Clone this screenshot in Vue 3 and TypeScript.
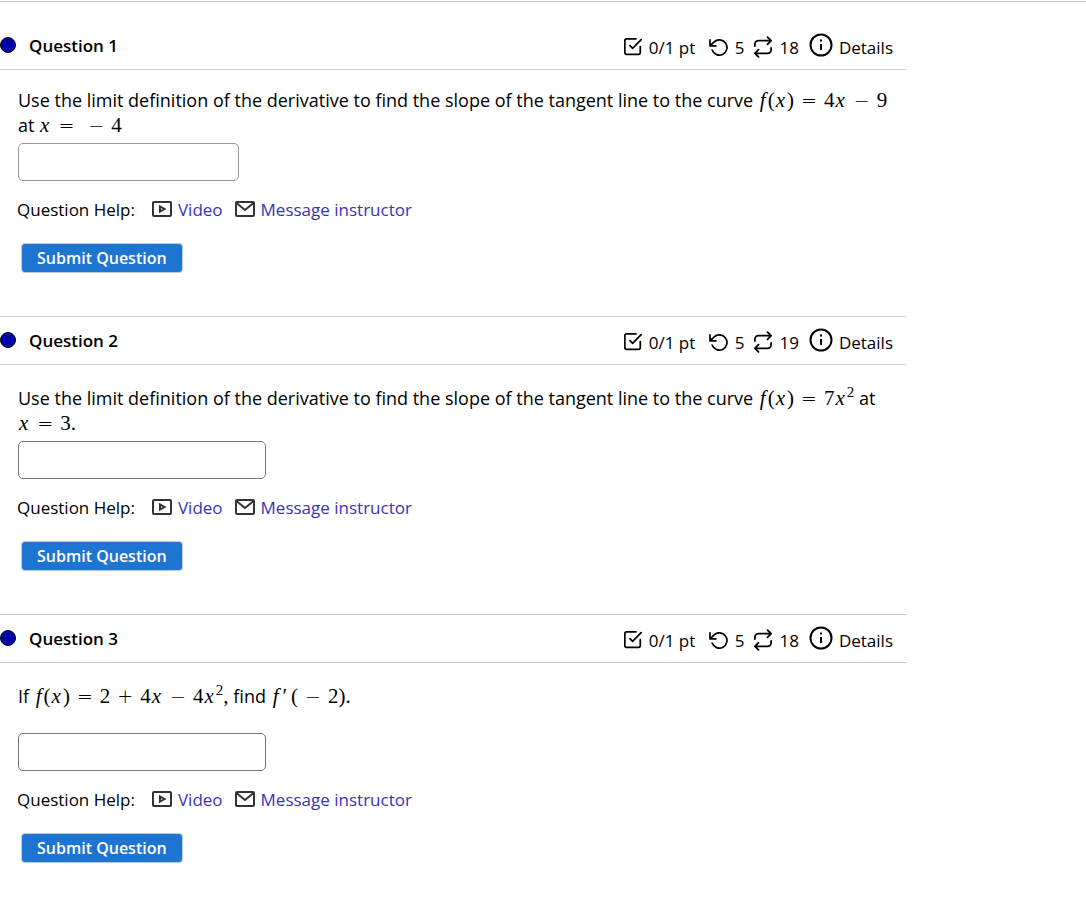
<script setup lang="ts">
type Kind = 'text' | 'num' | 'var' | 'fn' | 'op' | 'sup' | 'paren' | 'prime'

interface Piece {
  kind: Kind
  value: string
}

interface Question {
  id: number
  versions: number
  prompt: Piece[][]
  raised: boolean
  spaced: boolean
  wide: boolean
}

const p = (kind: Kind, value: string): Piece => ({ kind, value })
const fOfX = [p('fn', 'f'), p('paren', '('), p('var', 'x'), p('paren', ')')]
const lead = 'Use the limit definition of the derivative to find the slope of the tangent line to the curve '

const questions: Question[] = [
  {
    id: 1,
    versions: 18,
    raised: false,
    spaced: false,
    wide: false,
    prompt: [
      [p('text', lead)],
      [...fOfX, p('op', '='), p('num', '4'), p('var', 'x'), p('op', '−'), p('num', '9')],
      [p('text', ' at ')],
      [p('var', 'x'), p('op', '='), p('op', '−'), p('num', '4')],
    ],
  },
  {
    id: 2,
    versions: 19,
    raised: true,
    spaced: false,
    wide: true,
    prompt: [
      [p('text', lead)],
      [...fOfX, p('op', '='), p('num', '7'), p('var', 'x'), p('sup', '2')],
      [p('text', ' at ')],
      [p('var', 'x'), p('op', '='), p('num', '3.')],
    ],
  },
  {
    id: 3,
    versions: 18,
    raised: true,
    spaced: true,
    wide: true,
    prompt: [
      [p('text', 'If ')],
      [...fOfX, p('op', '='), p('num', '2'), p('op', '+'), p('num', '4'), p('var', 'x'), p('op', '−'), p('num', '4'), p('var', 'x'), p('sup', '2'), p('num', ',')],
      [p('text', ' find ')],
      [p('fn', 'f'), p('prime', '′'), p('paren', '('), p('op', '−'), p('num', '2'), p('paren', ')'), p('num', '.')],
    ],
  },
]
</script>

<template>
  <main class="page">
    <hr class="rule" />
    <section v-for="q in questions" :key="q.id" class="question">
      <header class="head">
        <span class="dot"></span>
        <h2 class="title">Question {{ q.id }}</h2>
        <div class="stats">
          <span class="stat score">
            <svg class="check" viewBox="2 2 21 21" aria-hidden="true">
              <path d="M9 11l3 3L22 4M21 12v7a2 2 0 0 1-2 2H5a2 2 0 0 1-2-2V5a2 2 0 0 1 2-2h11" />
            </svg>
            0/1 pt
          </span>
          <span class="stat">
            <svg class="undo" viewBox="0 2 22 20" aria-hidden="true">
              <path d="M1 3v7h7M3.500 15a9 9 0 1 0 2.100-9.400L1 10" />
            </svg>
            5
          </span>
          <span class="stat">
            <svg class="repeat" viewBox="2 0 20 24" aria-hidden="true">
              <path d="M17 1l4 4-4 4M3 11V9a4 4 0 0 1 4-4h14M7 23l-4-4 4-4M21 13v2a4 4 0 0 1-4 4H3" />
            </svg>
            {{ q.versions }}
          </span>
          <button type="button" class="details">
            <svg class="info" viewBox="0 0 24 24" aria-hidden="true">
              <circle cx="12" cy="12" r="10.500" />
              <path d="M12 11V17M12 6.500V8.500" />
            </svg>
            Details
          </button>
        </div>
      </header>

      <form class="body" @submit.prevent>
        <label
          class="prompt"
          :class="{ raised: q.raised, spaced: q.spaced }"
          :for="`answer-${q.id}`"
        ><span
          v-for="(group, g) in q.prompt"
          :key="g"
          :class="group[0].kind === 'text' ? 'words' : 'math'"
        ><span v-for="(piece, i) in group" :key="i" :class="piece.kind">{{ piece.value }}</span></span></label>
        <input :id="`answer-${q.id}`" class="answer" :class="{ wide: q.wide }" type="text" autocomplete="off" />
        <div class="help">
          <span class="help-label">Question Help:</span>
          <a class="link" href="#video">
            <svg class="video-icon" viewBox="0 0 20 16" aria-hidden="true">
              <rect x="1" y="1" width="18" height="14" rx="1" />
              <path d="M8 5.500V10.500L12.500 8Z" />
            </svg>
            Video
          </a>
          <a class="link" href="#message">
            <svg class="mail-icon" viewBox="0 0 20 16" aria-hidden="true">
              <rect x="1" y="1" width="18" height="14" rx="1" />
              <path d="M1.500 2L10 9L18.500 2" />
            </svg>
            Message instructor
          </a>
        </div>
        <button type="submit" class="submit">Submit Question</button>
      </form>
    </section>
  </main>
</template>

<style>
body {
  margin: 0;
  background: #fff;
}
</style>

<style scoped>
.page {
  padding-top: 1px;
  color: #000;
  font: 17px/25px "Open Sans", "Noto Sans", sans-serif;
}

.rule {
  height: 1px;
  margin: 0 0 19px;
  border: 0;
  background: #ccc;
}

.question {
  margin-right: 180px;
}

.head {
  display: flex;
  align-items: center;
  height: 47px;
  border-top: 1px solid #ccc;
  border-bottom: 1px solid #ccc;
}

.question:first-of-type .head {
  border-top-color: transparent;
}

.dot {
  box-sizing: border-box;
  width: 16px;
  height: 16px;
  margin: 0 13px 2px 0;
  border: 1px solid #000;
  border-radius: 50%;
  background: #00a;
}

.title {
  margin: 0;
  font-size: 17px;
  font-weight: 600;
}

.stats {
  display: flex;
  align-items: center;
  gap: 10px;
  margin-left: auto;
  padding: 3px 13px 0 0;
}

.stat {
  display: flex;
  align-items: center;
  gap: 7px;
  white-space: nowrap;
}

.score {
  min-width: 75px;
}

.details {
  display: flex;
  align-items: center;
  gap: 6px;
  padding: 0;
  border: 0;
  background: none;
  color: inherit;
  font: inherit;
}

svg {
  flex: none;
  fill: none;
  stroke: #000;
  stroke-width: 2;
}

.stat svg {
  stroke-linecap: round;
  stroke-linejoin: round;
}

.check {
  width: 18px;
  height: 18px;
}

.undo {
  width: 19px;
  height: 17px;
}

.repeat {
  width: 18px;
  height: 22px;
}

.info {
  width: 24px;
  height: 24px;
  margin-bottom: 5px;
}

.body {
  padding: 18px 14px 43px 18px;
}

.prompt {
  display: block;
  margin-bottom: 5px;
  font-size: 18px;
}

.raised {
  padding-top: 3px;
}

.spaced {
  margin-bottom: 24px;
}

.words span {
  white-space: pre-wrap;
}

.math {
  font-family: "Liberation Serif", serif;
  font-size: 21px;
  line-height: 20px;
  white-space: nowrap;
}

.var,
.fn {
  font-style: italic;
}

.var {
  margin: 0 2px 0 1px;
}

.fn {
  margin: 0 2px;
}

.prime {
  margin: 0 4px 0 2px;
}

.op {
  margin: 0 7px;
  font-family: "DejaVu Sans Light", "DejaVu Sans", sans-serif;
  font-weight: 200;
  font-size: 19px;
}

.sup {
  position: relative;
  top: -8px;
  font-size: 15px;
}

.answer {
  display: block;
  box-sizing: border-box;
  width: 221px;
  height: 38px;
  padding: 0 8px;
  border: 1px solid #999;
  border-radius: 5px;
  background: #fff;
  font: inherit;
}

.wide {
  width: 248px;
  border-color: #777;
}

.help {
  display: flex;
  align-items: center;
  height: 24px;
  margin: 16px 0 22px -1px;
}

.help-label {
  margin-right: 17px;
}

.link {
  display: flex;
  align-items: center;
  gap: 6px;
  margin-right: 12px;
  color: #3a33b4;
  text-decoration: none;
  white-space: nowrap;
}

.link svg {
  width: 20px;
  height: 16px;
  margin-bottom: 1px;
  stroke: #333;
}

.submit {
  display: block;
  height: 30px;
  margin-left: 3px;
  padding: 0 15px;
  border: 1px solid #bcd;
  border-radius: 4px;
  background: #1e74d1;
  color: #fff;
  font: 600 16px/26px "Open Sans", "Noto Sans", sans-serif;
}
</style>
